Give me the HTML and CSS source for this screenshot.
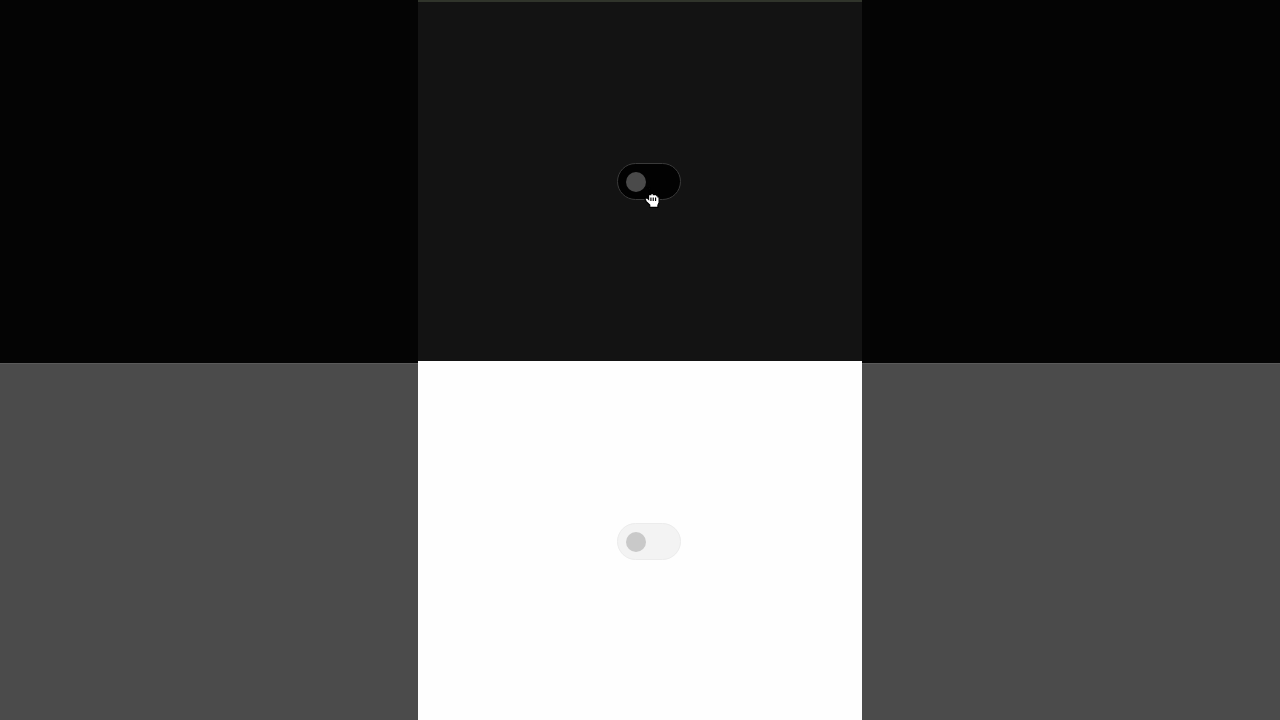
FILE: index.html
```html
<!DOCTYPE html>
<html lang="en">
<head>
<meta charset="utf-8">
<title>Toggle</title>
<link rel="stylesheet" href="styles.css">
</head>
<body>
<div class="screen">
  <div class="side side-dark"></div>
  <div class="panel panel-dark">
    <div class="toggle-wrap">
      <div class="toggle toggle-dark"><span class="knob"></span></div>
      <svg class="cursor" width="17" height="21" viewBox="0 0 14 18">
        <path d="M3.5 0.5 h2 v6 h1 v-1 h2 v1 h1 v0 h2 v1 h1 v1 h1 v5 l-1 2 v2 h-7 v-2 l-3 -3 l-1 -2 v-1 h2 l1 1 v-9 z" fill="#fff" stroke="#000" stroke-width="1" stroke-linejoin="miter"/>
        <path d="M6.5 9 v3 M8.5 9 v3 M10.5 9 v3" stroke="#000" stroke-width="1"/>
      </svg>
    </div>
  </div>
  <div class="side side-dark"></div>
  <div class="side side-gray"></div>
  <div class="panel panel-light">
    <div class="toggle toggle-light"><span class="knob"></span></div>
  </div>
  <div class="side side-gray"></div>
</div>
</body>
</html>
```
FILE: styles.css
```css
html, body {
  margin: 0;
  padding: 0;
  background: #030303;
  font-family: "Liberation Sans", Arial, sans-serif;
}
.screen {
  display: grid;
  grid-template-columns: 418px 444px 418px;
  grid-template-rows: 361px 359px;
  width: 1280px;
  height: 720px;
  overflow: hidden;
}
.side-dark {
  background: #040404;
}
.side-gray {
  background: #4b4b4b;
  border-top: 2px solid #040404;
  box-shadow: inset 0 1px 0 #5a5a5a;
}
.panel {
  display: flex;
  align-items: center;
  justify-content: center;
  box-sizing: border-box;
  padding-left: 18px;
}
.panel-dark {
  background: #131313;
  border-top: 2px solid #30342b;
}
.panel-light {
  background: #fefefe;
  padding-top: 2px;
}
.toggle-wrap {
  position: relative;
}
.toggle {
  box-sizing: border-box;
  width: 64px;
  height: 37px;
  border-radius: 19px;
  display: flex;
  align-items: center;
  padding-left: 8px;
}
.toggle-dark {
  background: #020202;
  border: 1px solid #3a3a3a;
}
.toggle-light {
  background: #f3f3f3;
  border: 1px solid #ececec;
}
.knob {
  width: 20px;
  height: 20px;
  border-radius: 50%;
}
.toggle-dark .knob {
  background: #4a4a4a;
}
.toggle-light .knob {
  background: #c9c9c9;
}
.cursor {
  position: absolute;
  left: 26px;
  top: 24px;
}
```
